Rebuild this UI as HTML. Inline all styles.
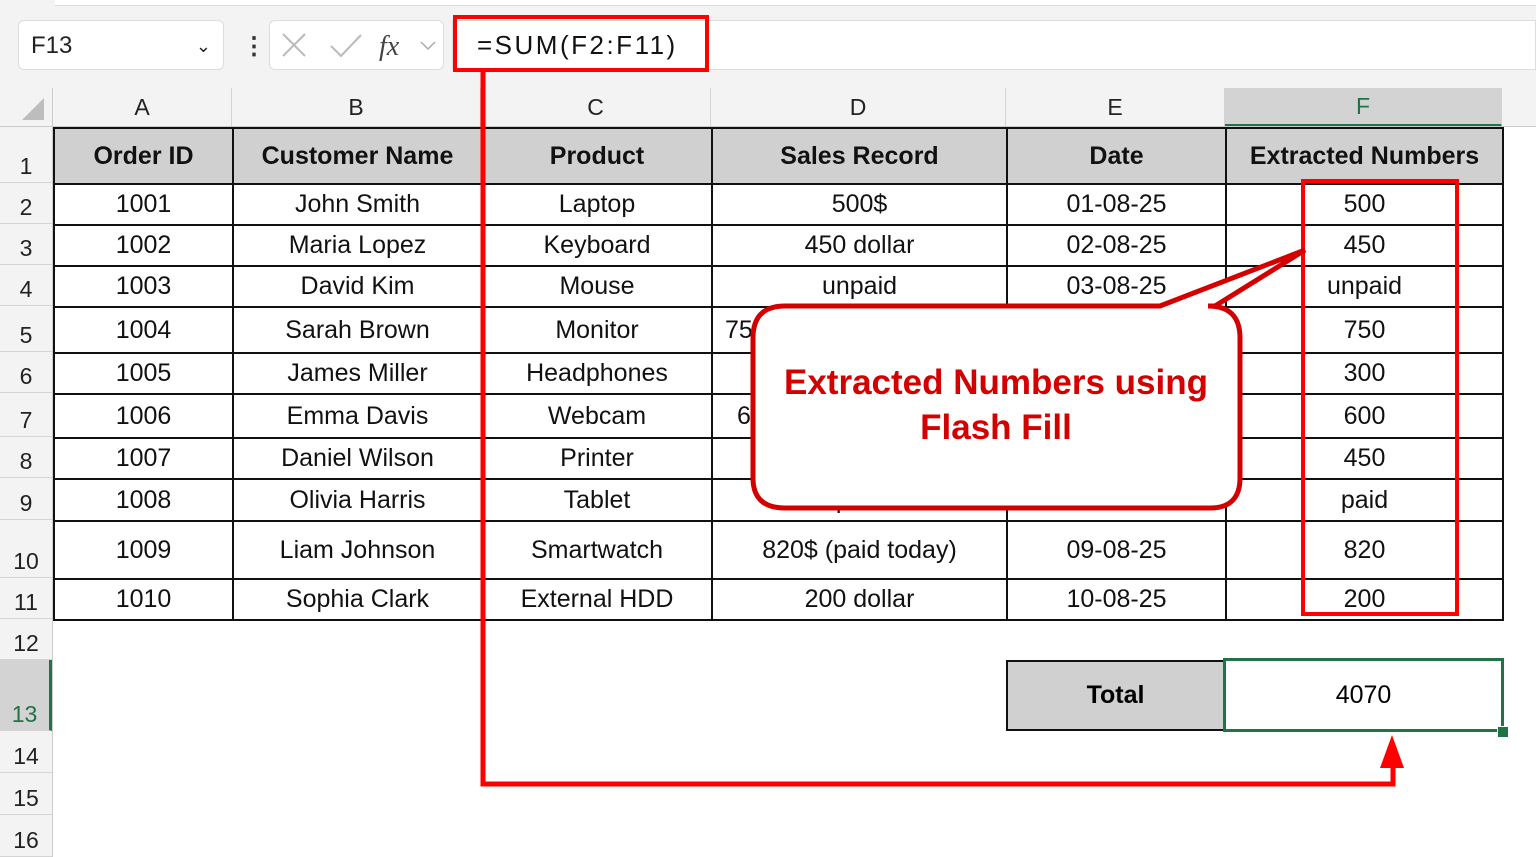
<!DOCTYPE html><html><head><style>
body{margin:0;width:1536px;height:857px;overflow:hidden;background:#fff;position:relative;font-family:"Liberation Sans",sans-serif;}
.a{position:absolute}
.rh{position:absolute;left:0;width:52px;background:#f3f3f3;border-bottom:1px solid #d4d4d4;font-size:23px;color:#222;display:flex;align-items:flex-end;justify-content:center;box-sizing:border-box;padding-bottom:2px}
.ch{position:absolute;top:88px;height:39px;background:#f3f3f3;border-right:1px solid #d4d4d4;font-size:23px;color:#222;display:flex;align-items:center;justify-content:center;box-sizing:border-box}
table{position:absolute;left:53px;top:127px;border-collapse:collapse;table-layout:fixed}
td{border:2px solid #111;text-align:center;font-size:25px;color:#111;padding:0;white-space:nowrap;overflow:hidden}
tr.h td{background:#d0d0d0;font-weight:bold}
</style></head><body>
<div class="a" style="left:0;top:0;width:1536px;height:88px;background:#f3f3f3"></div>
<div class="a" style="left:55px;top:0;width:1481px;height:5px;background:#fff;border-bottom:1px solid #ddd"></div>
<div class="a" style="left:18px;top:20px;width:206px;height:50px;background:#fff;border:1px solid #ddd;border-radius:6px;font-size:24px;line-height:50px;padding-left:12px;box-sizing:border-box;color:#222">F13<span style="position:absolute;right:12px;top:0;font-size:18px">&#8964;</span></div>
<div class="a" style="left:242px;top:32px;font-size:24px;font-weight:bold;color:#333">&#8942;</div>
<div class="a" style="left:269px;top:20px;width:175px;height:50px;background:#fff;border:1px solid #ddd;border-radius:6px;box-sizing:border-box"></div>
<svg class="a" style="left:269px;top:20px" width="175" height="50"><path d="M14 14L36 36M36 14L14 36" stroke="#bbb" stroke-width="2"/><path d="M62 26L72 36L92 15" stroke="#bbb" stroke-width="2" fill="none"/><text x="110" y="35" font-family="Liberation Serif" font-style="italic" font-size="28" fill="#444">fx</text><path d="M152 22L159 29L166 22" stroke="#aaa" stroke-width="1.5" fill="none"/></svg>
<div class="a" style="left:452px;top:20px;width:1084px;height:50px;background:#fff;border:1px solid #ddd;box-sizing:border-box"></div>
<div class="a" style="left:477px;top:30px;font-size:26px;color:#111;letter-spacing:2.5px">=SUM(F2:F11)</div>
<div class="a" style="left:0;top:88px;width:53px;height:39px;background:#f3f3f3;border-right:1px solid #ccc;box-sizing:border-box"></div>
<svg class="a" style="left:20px;top:96px" width="28" height="26"><path d="M24 2L24 24L2 24Z" fill="#bdbdbd"/></svg>
<div class="ch" style="left:53px;width:179px">A</div>
<div class="ch" style="left:232px;width:249px">B</div>
<div class="ch" style="left:481px;width:230px">C</div>
<div class="ch" style="left:711px;width:295px">D</div>
<div class="ch" style="left:1006px;width:219px">E</div>
<div class="ch" style="left:1225px;width:277px;background:#d3d3d3;border-bottom:3px solid #217346;color:#217346">F</div>
<div class="ch" style="left:1502px;width:34px;border:none"></div>
<div class="a" style="left:0;top:126px;width:1536px;height:1px;background:#ccc"></div>
<div class="a" style="left:52px;top:127px;width:1px;height:730px;background:#ccc"></div>
<div class="rh" style="top:127px;height:56px">1</div>
<div class="rh" style="top:183px;height:41px">2</div>
<div class="rh" style="top:224px;height:41px">3</div>
<div class="rh" style="top:265px;height:41px">4</div>
<div class="rh" style="top:306px;height:46px">5</div>
<div class="rh" style="top:352px;height:41px">6</div>
<div class="rh" style="top:393px;height:44px">7</div>
<div class="rh" style="top:437px;height:41px">8</div>
<div class="rh" style="top:478px;height:42px">9</div>
<div class="rh" style="top:520px;height:58px">10</div>
<div class="rh" style="top:578px;height:41px">11</div>
<div class="rh" style="top:619px;height:41px">12</div>
<div class="rh" style="top:660px;height:71px;background:#d3d3d3;color:#217346;border-right:3px solid #217346">13</div>
<div class="rh" style="top:731px;height:42px">14</div>
<div class="rh" style="top:773px;height:42px">15</div>
<div class="rh" style="top:815px;height:42px">16</div>
<table>
<colgroup><col style="width:179px"><col style="width:249px"><col style="width:230px"><col style="width:295px"><col style="width:219px"><col style="width:277px"></colgroup>
<tr class="h" style="height:56px"><td>Order ID</td><td>Customer Name</td><td>Product</td><td>Sales Record</td><td>Date</td><td>Extracted Numbers</td></tr>
<tr style="height:41px"><td>1001</td><td>John Smith</td><td>Laptop</td><td>500$</td><td>01-08-25</td><td>500</td></tr>
<tr style="height:41px"><td>1002</td><td>Maria Lopez</td><td>Keyboard</td><td>450 dollar</td><td>02-08-25</td><td>450</td></tr>
<tr style="height:41px"><td>1003</td><td>David Kim</td><td>Mouse</td><td>unpaid</td><td>03-08-25</td><td>unpaid</td></tr>
<tr style="height:46px"><td>1004</td><td>Sarah Brown</td><td>Monitor</td><td style="text-align:left;padding-left:12px">750</td><td>04-08-25</td><td>750</td></tr>
<tr style="height:41px"><td>1005</td><td>James Miller</td><td>Headphones</td><td>300</td><td>05-08-25</td><td>300</td></tr>
<tr style="height:44px"><td>1006</td><td>Emma Davis</td><td>Webcam</td><td style="text-align:left;padding-left:24px">600</td><td>06-08-25</td><td>600</td></tr>
<tr style="height:41px"><td>1007</td><td>Daniel Wilson</td><td>Printer</td><td>450</td><td>07-08-25</td><td>450</td></tr>
<tr style="height:42px"><td>1008</td><td>Olivia Harris</td><td>Tablet</td><td>paid</td><td>08-08-25</td><td>paid</td></tr>
<tr style="height:58px"><td>1009</td><td>Liam Johnson</td><td>Smartwatch</td><td>820$ (paid today)</td><td>09-08-25</td><td>820</td></tr>
<tr style="height:41px"><td>1010</td><td>Sophia Clark</td><td>External HDD</td><td>200 dollar</td><td>10-08-25</td><td>200</td></tr>
</table>
<div class="a" style="left:1006px;top:660px;width:219px;height:71px;background:#d0d0d0;border:2px solid #111;box-sizing:border-box;font-weight:bold;font-size:25px;display:flex;align-items:center;justify-content:center">Total</div>
<div class="a" style="left:1223px;top:658px;width:281px;height:74px;border:3px solid #217346;box-sizing:border-box;background:#fff;font-size:25px;display:flex;align-items:center;justify-content:center">4070</div>
<div class="a" style="left:1497px;top:726px;width:10px;height:10px;background:#217346;border:1px solid #fff"></div>
<svg class="a" style="left:0;top:0" width="1536" height="857">
<rect x="455" y="17" width="252" height="53" fill="none" stroke="#f00" stroke-width="4"/>
<rect x="1303" y="181" width="154" height="433" fill="none" stroke="#f00" stroke-width="4"/>
<path d="M483 71V784H1393V765" fill="none" stroke="#f00" stroke-width="5"/>
<path d="M1380 768L1392 735L1404 768Z" fill="#f00"/>
<path d="M785 306H1160L1305 250L1215 306H1208Q1240 306 1240 338V478Q1240 508 1210 508H785Q753 508 753 478V338Q753 306 785 306Z" fill="#fff" stroke="#d40000" stroke-width="5"/>
<text x="996" y="394" text-anchor="middle" font-family="Liberation Sans" font-weight="bold" font-size="35" fill="#d40000">Extracted Numbers using</text>
<text x="996" y="439" text-anchor="middle" font-family="Liberation Sans" font-weight="bold" font-size="35" fill="#d40000">Flash Fill</text>
</svg>
</body></html>
